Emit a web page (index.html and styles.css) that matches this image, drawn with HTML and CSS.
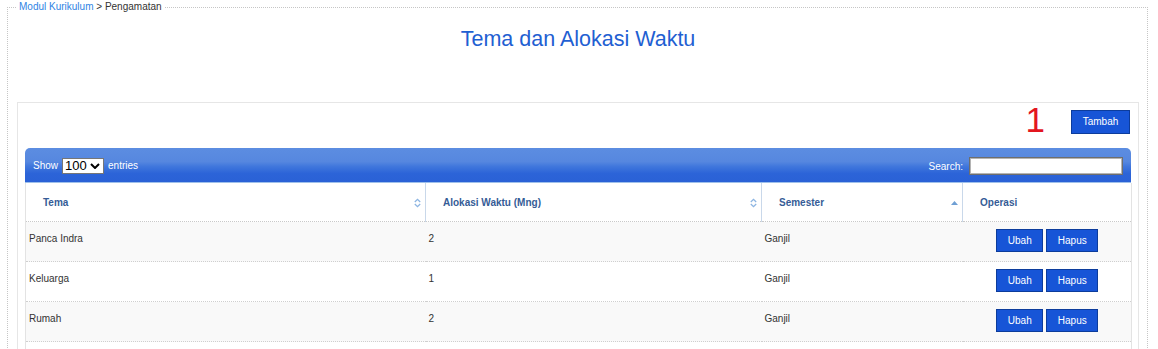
FILE: index.html
```html
<!DOCTYPE html>
<html lang="id">
<head>
<meta charset="utf-8">
<title>Tema dan Alokasi Waktu</title>
<link rel="stylesheet" href="styles.css">
</head>
<body>
<fieldset class="frame">
  <legend class="crumb"><a class="crumb-link" href="#">Modul Kurikulum</a> &gt; Pengamatan</legend>
  <h1 class="title">Tema dan Alokasi Waktu</h1>
  <div class="panel">
    <div class="toolbar">
      <span class="marker">1</span>
      <button class="btn btn-add" type="button">Tambah</button>
    </div>
    <div class="dt-bar">
      <label class="dt-length">Show
        <select class="dt-select">
          <option>10</option>
          <option>25</option>
          <option>50</option>
          <option selected>100</option>
        </select>
        entries</label>
      <label class="dt-search">Search: <input class="dt-input" type="text"></label>
    </div>
    <table class="dt-table">
      <colgroup>
        <col class="c-tema">
        <col class="c-alok">
        <col class="c-sem">
        <col class="c-op">
      </colgroup>
      <thead>
        <tr>
          <th class="th-first"><div class="th-in"><span>Tema</span>
            <svg class="sort-both" width="7" height="10" viewBox="0 0 7 10"><path d="M0.8 4 L3.5 1.3 L6.2 4 M0.8 6 L3.5 8.7 L6.2 6" fill="none" stroke="#8db5e2" stroke-width="1.3"/></svg></div></th>
          <th><div class="th-in"><span>Alokasi Waktu (Mng)</span>
            <svg class="sort-both" width="7" height="10" viewBox="0 0 7 10"><path d="M0.8 4 L3.5 1.3 L6.2 4 M0.8 6 L3.5 8.7 L6.2 6" fill="none" stroke="#8db5e2" stroke-width="1.3"/></svg></div></th>
          <th><div class="th-in"><span>Semester</span>
            <svg class="sort-asc" width="7" height="4" viewBox="0 0 7 4"><path d="M0 4 L3.5 0 L7 4 Z" fill="#6f9fd4"/></svg></div></th>
          <th><div class="th-in"><span>Operasi</span></div></th>
        </tr>
      </thead>
      <tbody>
        <tr class="odd">
          <td>Panca Indra</td><td>2</td><td>Ganjil</td>
          <td class="ops"><div class="ops-in"><button class="btn btn-edit" type="button">Ubah</button><button class="btn btn-del" type="button">Hapus</button></div></td>
        </tr>
        <tr class="even">
          <td>Keluarga</td><td>1</td><td>Ganjil</td>
          <td class="ops"><div class="ops-in"><button class="btn btn-edit" type="button">Ubah</button><button class="btn btn-del" type="button">Hapus</button></div></td>
        </tr>
        <tr class="odd">
          <td>Rumah</td><td>2</td><td>Ganjil</td>
          <td class="ops"><div class="ops-in"><button class="btn btn-edit" type="button">Ubah</button><button class="btn btn-del" type="button">Hapus</button></div></td>
        </tr>
        <tr class="even">
          <td>Binatang</td><td>2</td><td>Ganjil</td>
          <td class="ops"><div class="ops-in"><button class="btn btn-edit" type="button">Ubah</button><button class="btn btn-del" type="button">Hapus</button></div></td>
        </tr>
      </tbody>
    </table>
  </div>
</fieldset>
</body>
</html>
```
FILE: styles.css
```css
html, body {
  margin: 0;
  padding: 0;
  background: #ffffff;
}

body {
  font-family: "Liberation Sans", Arial, sans-serif;
  font-size: 10px;
  color: #333333;
}

.frame {
  margin: 1px 10px 0 7px;
  padding: 0 8px 30px 9px;
  border: 1px dotted #c6c6c6;
  min-width: 0;
}

.crumb {
  padding: 0 2px;
  font-size: 10px;
  line-height: 12px;
  color: #333333;
}

.crumb-link {
  color: #2f84e4;
  text-decoration: none;
}

.title {
  margin: 14px 0 51px;
  font-size: 21.5px;
  line-height: 24px;
  font-weight: normal;
  text-align: center;
  color: #1f60d2;
}

.panel {
  border: 1px solid #e6e6e6;
  padding: 7px 7px 10px;
}

.toolbar {
  display: flex;
  justify-content: flex-end;
  align-items: flex-start;
  height: 24px;
  margin-bottom: 14px;
  padding-right: 1px;
}

.marker {
  font-size: 35px;
  line-height: 24px;
  height: 24px;
  color: #e3161f;
  margin: -2px 26px 0 0;
}

.btn {
  font-family: "Liberation Sans", Arial, sans-serif;
  font-size: 10px;
  color: #ffffff;
  background: #1755d7;
  border: 1px solid #0c3c9c;
  border-radius: 0;
  cursor: pointer;
  margin: 0;
  padding: 0;
  text-align: center;
}

.btn-add {
  height: 24px;
  width: 59px;
  line-height: 22px;
}

.dt-bar {
  display: flex;
  justify-content: space-between;
  align-items: center;
  height: 34px;
  padding: 0 8px;
  border-radius: 5px 5px 0 0;
  background: linear-gradient(to bottom, #5c8de1 0%, #5687df 40%, #3f76dc 55%, #2c64d8 75%, #2a61d6 100%);
  border-bottom: 1px solid #9fc0ea;
  color: #ffffff;
}

.dt-length {
  display: flex;
  align-items: center;
  gap: 4px;
  padding-top: 1px;
}

.dt-select {
  -webkit-appearance: none;
  appearance: none;
  width: 42px;
  height: 16px;
  font-family: "Liberation Sans", Arial, sans-serif;
  font-size: 13px;
  line-height: 14px;
  padding: 0 0 0 2px;
  border: 1px solid #767676;
  border-radius: 0;
  background: #ffffff url("data:image/svg+xml;utf8,<svg xmlns='http://www.w3.org/2000/svg' width='10' height='6' viewBox='0 0 10 6'><path d='M1 1 L5 5 L9 1' fill='none' stroke='%23000' stroke-width='2'/></svg>") no-repeat right 3px center;
  color: #000000;
}

.dt-search {
  display: flex;
  align-items: center;
  gap: 6px;
  padding-top: 2px;
}

.dt-input {
  width: 154px;
  height: 18px;
  box-sizing: border-box;
  border: 1px solid #6e6e6e;
  box-shadow: inset 0 0 0 1px #b4b4b4;
  padding: 0 3px;
  margin: 0;
  font-size: 11px;
}

.dt-table {
  width: 100%;
  border-collapse: collapse;
  table-layout: fixed;
  border-left: 1px solid #e3e3e3;
  border-right: 1px solid #e3e3e3;
}

.c-tema { width: 400px; }
.c-alok { width: 336px; }
.c-sem { width: 201px; }
.c-op { width: 169px; }

.dt-table th {
  padding: 0;
  background: #ffffff;
  border-left: 1px solid #c9d8ea;
  border-bottom: 1px dotted #c9c9c9;
  text-align: left;
  font-weight: bold;
  font-size: 10px;
  color: #355c96;
}

.dt-table th.th-first {
  border-left: 1px solid #e3e3e3;
}

.th-in {
  height: 38px;
  display: flex;
  align-items: center;
  justify-content: space-between;
  padding: 0 4px 0 17px;
}

.sort-both {
  display: block;
  margin-top: 1px;
}

.sort-asc {
  display: block;
  margin-top: 1px;
}

.dt-table td {
  padding: 10px 3px 0;
  vertical-align: top;
  line-height: 14px;
  border-bottom: 1px dotted #cfcfcf;
  color: #333333;
}

.dt-table tr.odd td {
  background: #f9f9f9;
}

.dt-table tr.even td {
  background: #ffffff;
}

.dt-table td.ops {
  padding: 7px 0 9px;
}

.ops-in {
  display: flex;
  justify-content: center;
  gap: 3px;
  padding-left: 1px;
}

.btn-edit,
.btn-del {
  height: 23px;
  line-height: 21px;
}

.btn-edit {
  width: 47px;
}

.btn-del {
  width: 52px;
}
```
